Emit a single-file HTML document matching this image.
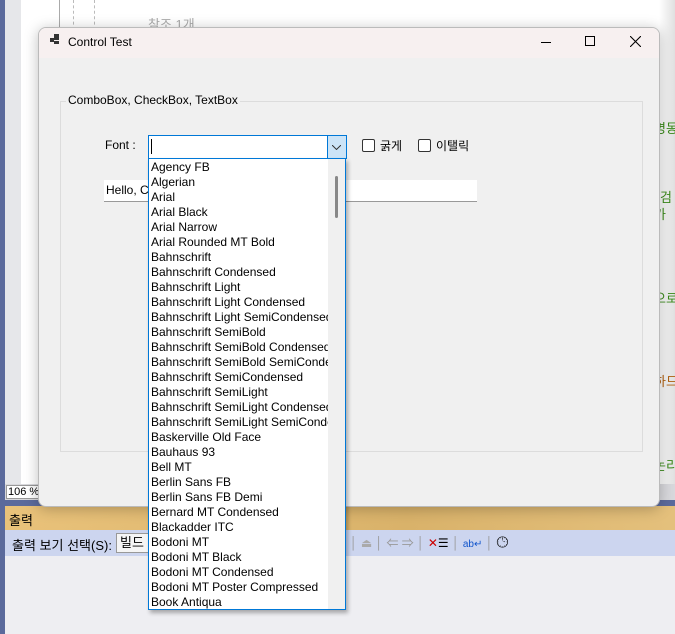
<!DOCTYPE html>
<html><head><meta charset="utf-8"><style>
*{margin:0;padding:0;box-sizing:border-box}
body{width:675px;height:634px;overflow:hidden;position:relative;background:#fff;font-family:"Segoe UI","Liberation Sans","Noto Sans CJK KR",sans-serif;font-size:12px;color:#000}
.abs{position:absolute;white-space:nowrap}
.green{color:#3a8a1a;font-size:13px}
.item{height:15px;line-height:15px;padding-left:2px;white-space:nowrap;overflow:hidden}
</style></head><body>
<div class="abs" style="left:0;top:0;width:5px;height:634px;background:#5b6a9c"></div>
<div class="abs" style="left:5px;top:0;width:16px;height:484px;background:#e6e7ea"></div>
<div class="abs" style="left:59px;top:0;width:1px;height:30px;background:#aaa"></div>
<div class="abs" style="left:73px;top:0;width:0;height:30px;border-left:1px dashed #bbb"></div>
<div class="abs" style="left:94px;top:0;width:0;height:30px;border-left:1px dashed #bbb"></div>
<div class="abs" style="left:148px;top:14px;color:#aaa;font-size:13px">참조 1개</div>
<div class="abs" style="left:659px;top:0;width:16px;height:484px;background:linear-gradient(90deg,#fff,#e0e0e0)"></div>
<div class="abs" style="left:659px;top:0;width:16px;height:484px;overflow:hidden">
<div class="abs green" style="left:-5px;top:118px">명동</div>
<div class="abs green" style="left:1px;top:187px">검</div>
<div class="abs green" style="left:-5px;top:204px">가</div>
<div class="abs green" style="left:-5px;top:288px">으로</div>
<div class="abs green" style="left:-5px;top:371px;color:#b06010">하드</div>
<div class="abs green" style="left:-5px;top:455px">논리</div>
</div>
<div class="abs" style="left:5px;top:484px;width:670px;height:16px;background:#d8d8dc"></div>
<div class="abs" style="left:6px;top:485px;width:34px;height:14px;background:#fff;border:1px solid #999;font-size:11px;line-height:12px;padding-left:1px">106 %</div>
<div class="abs" style="left:5px;top:500px;width:670px;height:6px;background:#5b6a9c"></div>
<div class="abs" style="left:5px;top:506px;width:670px;height:24px;background:linear-gradient(90deg,#e9c27a,#d9b26a 60%,#e4c07c)"></div>
<div class="abs" style="left:9px;top:510px;font-size:13px">출력</div>
<div class="abs" style="left:5px;top:530px;width:670px;height:26px;background:#ccd5ef"></div>
<div class="abs" style="left:12px;top:535px;font-size:13px">출력 보기 선택(S):</div>
<div class="abs" style="left:116px;top:533px;width:40px;height:20px;background:#f5f5f5;border:1px solid #999;padding-left:3px;font-size:13px;line-height:18px">빌드</div>
<div class="abs" style="left:5px;top:556px;width:670px;height:78px;background:#eeeef2"></div>
<div class="abs" style="left:350px;top:533px;width:170px;height:20px;color:#999;font-size:12px;line-height:20px">│ <span style="color:#aaa">⏏</span> │ ⇐ ⇒ │ <span style="color:#c00">✕</span><span style="color:#000">☰</span> │ <span style="color:#15c;font-size:10px">ab↵</span> │ <span style="color:#000;font-size:15px">🕒︎</span></div>
<div class="abs" style="left:38px;top:27px;width:622px;height:480px;background:#f0f0f0;border:1px solid #bbb;border-radius:8px;box-shadow:0 2px 14px rgba(0,0,0,.25);overflow:hidden">
 <div style="height:30px;background:#f7f0f0;position:relative">
  <div class="abs" style="left:11px;top:10px;width:4px;height:4px;background:#333"></div>
  <div class="abs" style="left:15px;top:6px;width:5px;height:6px;background:#333"></div>
  <div class="abs" style="left:15px;top:13px;width:5px;height:3px;background:#333"></div>
  <div class="abs" style="left:29px;top:7px;font-size:12px">Control Test</div>
  <div class="abs" style="left:502px;top:14px;width:10px;height:1px;background:#000"></div>
  <div class="abs" style="left:546px;top:8px;width:10px;height:10px;border:1px solid #000"></div>
  <svg class="abs" style="left:591px;top:8px" width="11" height="11"><path d="M0 0L11 11M11 0L0 11" stroke="#000" stroke-width="1.1"/></svg>
 </div>
 <div class="abs" style="left:21px;top:73px;width:583px;height:351px;border:1px solid #dcdcdc"></div>
 <div class="abs" style="left:27px;top:65px;background:#f0f0f0;padding:0 2px;font-size:12px">ComboBox, CheckBox, TextBox</div>
 <div class="abs" style="left:66px;top:110px">Font :</div>
 <div class="abs" style="left:109px;top:107px;width:199px;height:24px;border:1px solid #0078d7;background:#fff">
  <div class="abs" style="left:2px;top:3px;width:1px;height:15px;background:#000"></div>
  <div class="abs" style="right:0;top:0;width:19px;height:22px;background:#cce4f7;border-left:1px solid #0078d7"></div>
  <svg class="abs" style="right:5px;top:9px" width="9" height="5"><path d="M0 0L4.5 4.5L9 0" stroke="#333" fill="none"/></svg>
 </div>
 <div class="abs" style="left:323px;top:111px;width:13px;height:13px;border:1px solid #333;border-radius:2px;background:#fff"></div>
 <div class="abs" style="left:341px;top:109px;font-size:12px">굵게</div>
 <div class="abs" style="left:379px;top:111px;width:13px;height:13px;border:1px solid #333;border-radius:2px;background:#fff"></div>
 <div class="abs" style="left:397px;top:109px;font-size:12px">이탤릭</div>
 <div class="abs" style="left:65px;top:152px;width:373px;height:22px;background:#fff;border-bottom:1px solid #999;padding:3px 2px">Hello, C</div>
</div>
<div class="abs" style="left:148px;top:158px;width:198px;height:452px;background:#fff;border:1px solid #0078d7;box-shadow:2px 3px 4px rgba(0,0,0,.3);overflow:hidden;font-size:12px">
 <div class="abs" style="right:0;top:0;width:17px;height:450px;background:#f0f0f0"></div>
 <div class="abs" style="left:186px;top:17px;width:3px;height:42px;background:#888;border-radius:2px"></div>
 <div style="width:180px;padding-top:1px">
 <div class="item">Agency FB</div><div class="item">Algerian</div><div class="item">Arial</div><div class="item">Arial Black</div><div class="item">Arial Narrow</div><div class="item">Arial Rounded MT Bold</div><div class="item">Bahnschrift</div><div class="item">Bahnschrift Condensed</div><div class="item">Bahnschrift Light</div><div class="item">Bahnschrift Light Condensed</div><div class="item">Bahnschrift Light SemiCondensed</div><div class="item">Bahnschrift SemiBold</div><div class="item">Bahnschrift SemiBold Condensed</div><div class="item">Bahnschrift SemiBold SemiCondensed</div><div class="item">Bahnschrift SemiCondensed</div><div class="item">Bahnschrift SemiLight</div><div class="item">Bahnschrift SemiLight Condensed</div><div class="item">Bahnschrift SemiLight SemiCondensed</div><div class="item">Baskerville Old Face</div><div class="item">Bauhaus 93</div><div class="item">Bell MT</div><div class="item">Berlin Sans FB</div><div class="item">Berlin Sans FB Demi</div><div class="item">Bernard MT Condensed</div><div class="item">Blackadder ITC</div><div class="item">Bodoni MT</div><div class="item">Bodoni MT Black</div><div class="item">Bodoni MT Condensed</div><div class="item">Bodoni MT Poster Compressed</div><div class="item">Book Antiqua</div>
 </div>
</div>
</body></html>
